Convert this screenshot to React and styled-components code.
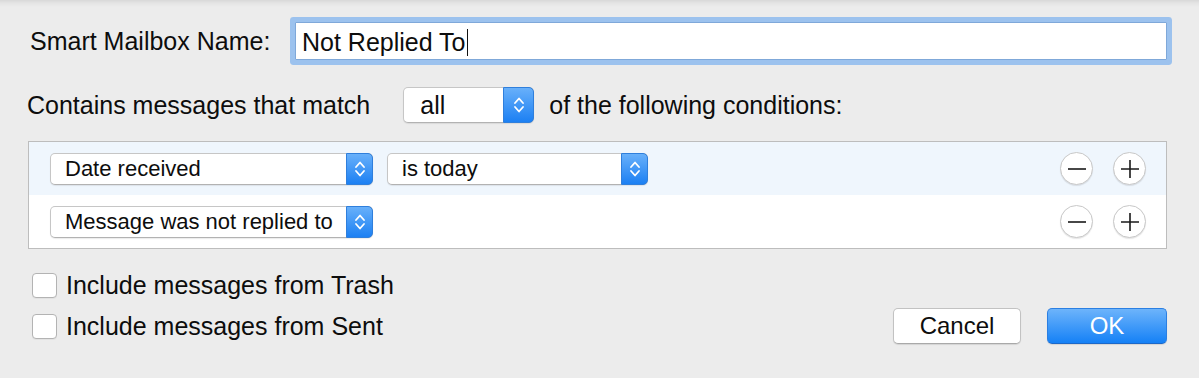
import React from 'react';
import styled, { createGlobalStyle } from 'styled-components';

const GlobalStyle = createGlobalStyle`
  html, body {
    margin: 0;
    padding: 0;
    background: #ececec;
  }
  body {
    font-family: "Liberation Sans", Arial, sans-serif;
    color: #0d0d0d;
  }
`;

const Dialog = styled.div`
  width: 1199px;
  height: 378px;
  box-sizing: border-box;
  padding: 22px 32px 0 27px;
  display: flex;
  flex-direction: column;
  background: linear-gradient(#d8d8d8 0px, #e4e4e4 3px, #ececec 7px);
`;

const NameRow = styled.div`
  display: flex;
  align-items: center;
  padding-left: 3px;
`;

const Label = styled.span`
  font-size: 25px;
  width: ${props => props.width || 'auto'};
  flex-shrink: 0;
  white-space: nowrap;
`;

const NameField = styled.div`
  flex: 1;
  height: 38px;
  box-sizing: border-box;
  display: flex;
  align-items: center;
  padding: 2px 0 0 6px;
  background: #fff;
  border: 1px solid #7fa8d9;
  border-radius: 1px;
  box-shadow: 0 0 0 5px #9cc2ee;
  font-size: 25px;
`;

const Caret = styled.span`
  display: inline-block;
  width: 1.5px;
  height: 27px;
  background: #111;
  margin-left: 1px;
`;

const MatchRow = styled.div`
  display: flex;
  align-items: center;
  margin-top: 27px;
  gap: 15px;
`;

const Popup = styled.div`
  display: flex;
  align-items: stretch;
  width: ${props => props.width}px;
  height: ${props => props.height}px;
  box-sizing: border-box;
  margin-left: ${props => props.offset || 0}px;
  background: #fff;
  border: 1px solid #c6c6c6;
  border-bottom-color: #b2b2b2;
  border-radius: 5px;
  box-shadow: 0 1px 1px rgba(0, 0, 0, 0.08);
  flex-shrink: 0;
`;

const PopupText = styled.span`
  flex: 1;
  display: flex;
  align-items: center;
  padding-left: ${props => props.pad}px;
  font-size: ${props => props.size}px;
  white-space: nowrap;
`;

const Stepper = styled.span`
  width: ${props => props.width}px;
  margin: -1px -1px -1px 0;
  display: flex;
  align-items: center;
  justify-content: center;
  border-radius: 0 5px 5px 0;
  background: linear-gradient(#68b0fa, #1c80f3);
  border: 1px solid #2f7fdc;
  box-sizing: border-box;
`;

const Conditions = styled.div`
  margin-top: 18px;
  margin-left: 1px;
  border: 1px solid #bdbdbd;
  background: #fff;
`;

const CondRow = styled.div`
  height: 53px;
  display: flex;
  align-items: center;
  gap: 14px;
  padding: 0 20px 0 21px;
  background: ${props => (props.selected ? '#eff6fd' : '#fff')};
`;

const RowButtons = styled.div`
  margin-left: auto;
  display: flex;
  gap: 20px;
`;

const Round = styled.span`
  width: 33px;
  height: 33px;
  box-sizing: border-box;
  border-radius: 50%;
  background: #fff;
  border: 1px solid #c8c8c8;
  box-shadow: 0 1px 1px rgba(0, 0, 0, 0.1);
  display: flex;
  align-items: center;
  justify-content: center;
`;

const Footer = styled.div`
  margin-top: 18px;
  display: flex;
  align-items: flex-end;
`;

const Checks = styled.div`
  display: flex;
  flex-direction: column;
  gap: 5px;
  padding-left: 5px;
`;

const CheckRow = styled.label`
  height: 36px;
  display: flex;
  align-items: center;
  gap: 9px;
  font-size: 25px;
`;

const Box = styled.span`
  width: 25px;
  height: 25px;
  box-sizing: border-box;
  border: 1px solid #b3b3b3;
  border-radius: 4px;
  background: #fff;
  box-shadow: 0 1px 0 rgba(0, 0, 0, 0.04);
`;

const Buttons = styled.div`
  margin-left: auto;
  display: flex;
  gap: 26px;
`;

const Button = styled.button`
  width: ${props => props.width}px;
  height: 36px;
  box-sizing: border-box;
  border-radius: 5px;
  font-family: inherit;
  font-size: 24px;
  padding: 0;
  border: 1px solid ${props => (props.primary ? '#2b7fe2' : '#c2c2c2')};
  border-bottom-color: ${props => (props.primary ? '#1c68c8' : '#a9a9a9')};
  color: ${props => (props.primary ? '#fff' : '#0d0d0d')};
  background: ${props =>
    props.primary ? 'linear-gradient(#6db4fb, #1581f6)' : '#fff'};
  box-shadow: 0 1px 1px rgba(0, 0, 0, 0.1);
`;

const Chevrons = () => (
  <svg width="12" height="22" viewBox="0 0 12 22">
    <path
      d="M2 9 L6 4.5 L10 9 M2 13 L6 17.5 L10 13"
      fill="none"
      stroke="#fff"
      strokeWidth="1.8"
      strokeLinecap="round"
      strokeLinejoin="round"
    />
  </svg>
);

const Sign = ({ plus }) => (
  <svg width="20" height="20" viewBox="0 0 20 20">
    <path
      d={plus ? 'M1 10 H19 M10 1 V19' : 'M1 10 H19'}
      stroke="#1a1a1a"
      strokeWidth="1.6"
    />
  </svg>
);

const Select = ({ label, width, height = 32, size = 22, pad = 14, offset, step = 27 }) => (
  <Popup width={width} height={height} offset={offset}>
    <PopupText pad={pad} size={size}>{label}</PopupText>
    <Stepper width={step}>
      <Chevrons />
    </Stepper>
  </Popup>
);

const conditions = [
  { selected: true, parts: [{ label: 'Date received', width: 323 }, { label: 'is today', width: 261 }] },
  { selected: false, parts: [{ label: 'Message was not replied to', width: 323 }] },
];

export default function App() {
  return (
    <>
      <GlobalStyle />
      <Dialog>
        <NameRow>
          <Label width="265px">Smart Mailbox Name:</Label>
          <NameField>
            Not Replied To
            <Caret />
          </NameField>
        </NameRow>

        <MatchRow>
          <Label>Contains messages that match</Label>
          <Select label="all" width={131} height={36} size={25} pad={16} offset={18} step={31} />
          <Label>of the following conditions:</Label>
        </MatchRow>

        <Conditions>
          {conditions.map((row, i) => (
            <CondRow key={i} selected={row.selected}>
              {row.parts.map(p => (
                <Select key={p.label} label={p.label} width={p.width} />
              ))}
              <RowButtons>
                <Round><Sign /></Round>
                <Round><Sign plus /></Round>
              </RowButtons>
            </CondRow>
          ))}
        </Conditions>

        <Footer>
          <Checks>
            <CheckRow><Box />Include messages from Trash</CheckRow>
            <CheckRow><Box />Include messages from Sent</CheckRow>
          </Checks>
          <Buttons>
            <Button width={128}>Cancel</Button>
            <Button width={120} primary>OK</Button>
          </Buttons>
        </Footer>
      </Dialog>
    </>
  );
}
